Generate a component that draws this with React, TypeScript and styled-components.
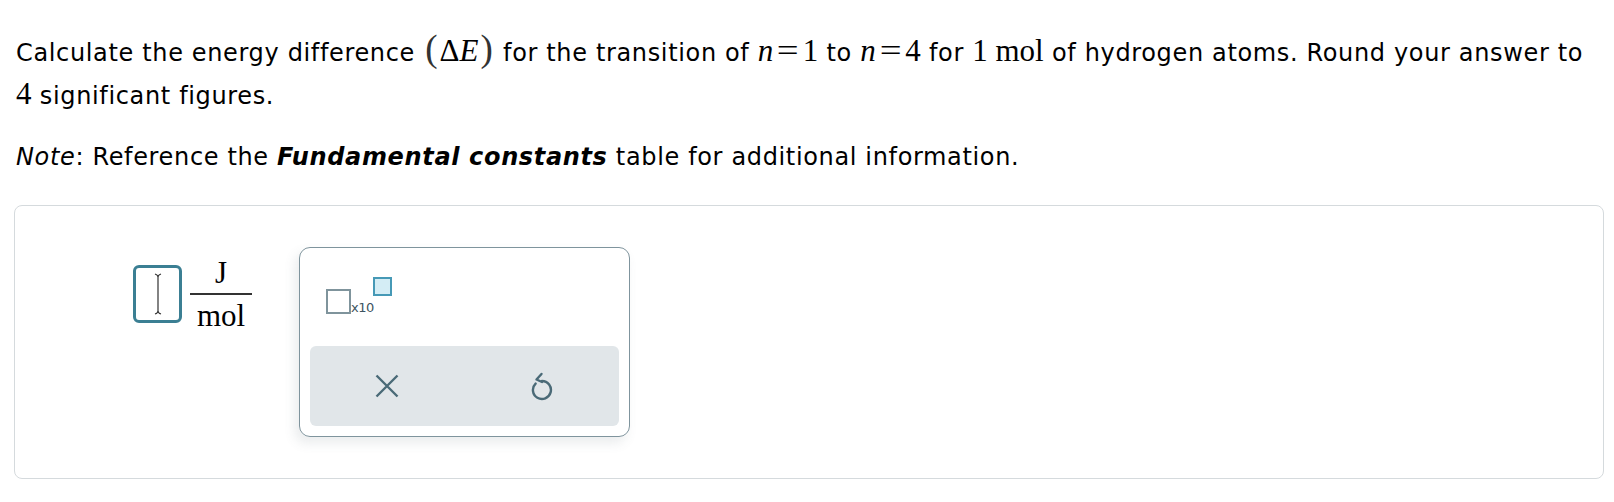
import React from 'react';
import styled, { createGlobalStyle } from 'styled-components';

const GlobalStyle = createGlobalStyle`
  body {
    margin: 0;
    background: #fff;
    font-family: "DejaVu Sans", Verdana, sans-serif;
    color: #000;
  }
`;

const Page = styled.div`
  padding: 30px 10px 0 16px;
`;

const Question = styled.p`
  margin: 0;
  font-size: 24px;
  line-height: 43px;
  letter-spacing: 0.65px;
`;

const NoteLine = styled.p`
  margin: 24px 0 0;
  font-size: 24px;
  line-height: 30px;
  letter-spacing: 0.65px;
`;

const Math = styled.span`
  font-family: "Liberation Serif", "Times New Roman", serif;
  font-size: 31px;
  line-height: 1;
  letter-spacing: 0;
`;

const Var = styled.i`
  font-family: "Liberation Serif", "Times New Roman", serif;
  font-size: 31px;
  line-height: 1;
  letter-spacing: 0;
  margin-right: 2px;
`;

const Op = styled.span`
  display: inline-block;
  font-family: "Liberation Serif", "Times New Roman", serif;
  font-size: 31px;
  line-height: 1;
  margin: 0 6px 0 4px;
  letter-spacing: 0;
  transform: scaleX(1.25);
`;

const Paren = styled.span`
  font-family: "Liberation Serif", serif;
  font-size: 37px;
  line-height: 1;
  color: #333;
  letter-spacing: 0;
  margin: 0 2px;
`;

const Panel = styled.div`
  margin: 33px 0 0 -2px;
  width: 1590px;
  height: 274px;
  box-sizing: border-box;
  border: 1px solid #d5dadd;
  border-radius: 8px;
  display: flex;
  align-items: flex-start;
  padding: 41px 0 0 118px;
`;

const UnitGroup = styled.div`
  display: flex;
  align-items: center;
  gap: 8px;
  margin-top: 9px;
`;

const InputBox = styled.div`
  width: 49px;
  height: 58px;
  box-sizing: border-box;
  border: 3px solid #3b7f93;
  border-radius: 6px;
  display: flex;
  justify-content: center;
  align-items: center;
  background: #fff;
`;

const Fraction = styled.div`
  display: flex;
  flex-direction: column;
  align-items: center;
  font-family: "Liberation Serif", "Times New Roman", serif;
  font-size: 31px;
  line-height: 30px;
  width: 62px;
  margin-top: 2px;
`;

const FracLine = styled.div`
  width: 100%;
  height: 2px;
  background: #333;
  margin: 5px 0 6px;
`;

const Keypad = styled.div`
  margin-left: 47px;
  width: 331px;
  height: 190px;
  box-sizing: border-box;
  border: 1px solid #7f949d;
  border-radius: 11px;
  box-shadow: -4px 6px 12px rgba(80, 100, 110, 0.12);
  padding: 0 10px 10px;
  display: flex;
  flex-direction: column;
`;

const Templates = styled.div`
  height: 98px;
  display: flex;
  align-items: flex-start;
  padding: 30px 0 0 16px;
  box-sizing: border-box;
`;

const SciNotation = styled.div`
  display: flex;
  align-items: flex-end;
  height: 36px;
`;

const BaseBox = styled.div`
  width: 25px;
  height: 25px;
  box-sizing: border-box;
  border: 2px solid #7f949c;
`;

const TimesTen = styled.span`
  font-family: "DejaVu Sans", sans-serif;
  font-size: 13px;
  color: #3d5561;
  letter-spacing: -0.5px;
  margin-bottom: -1px;
`;

const ExpBox = styled.div`
  width: 19px;
  height: 19px;
  box-sizing: border-box;
  border: 2px solid #4699b6;
  background: #d4edf5;
  align-self: flex-start;
  margin-left: -1px;
  margin-top: -1px;
`;

const ActionBar = styled.div`
  flex: 1;
  background: #e1e6e9;
  border-radius: 6px;
  display: flex;
  justify-content: space-around;
  align-items: center;
`;

const IconButton = styled.button`
  width: 60px;
  height: 50px;
  border: none;
  background: transparent;
  display: flex;
  justify-content: center;
  align-items: center;
  padding: 0;
`;

const Cursor = () => (
  <svg width="10" height="42" viewBox="0 0 10 42">
    <path d="M2 1 Q5 2 5 4 Q5 2 8 1 M5 4 V38 M2 41 Q5 40 5 38 Q5 40 8 41" stroke="#333" strokeWidth="1.2" fill="none" />
  </svg>
);

const CloseIcon = () => (
  <svg width="24" height="24" viewBox="0 0 24 24">
    <path d="M1.5 1.5 L22.5 22.5 M22.5 1.5 L1.5 22.5" stroke="#4a6a77" strokeWidth="2.4" fill="none" />
  </svg>
);

const ResetIcon = () => (
  <svg width="24" height="30" viewBox="0 0 24 30">
    <path
      d="M12 10 A9 9 0 1 1 5.6 12.6"
      stroke="#4a6a77"
      strokeWidth="2.4"
      fill="none"
      strokeLinecap="round"
    />
    <path d="M11.5 3 L6.5 8.5 L12 11" stroke="#4a6a77" strokeWidth="2.4" fill="none" strokeLinecap="round" strokeLinejoin="round" />
  </svg>
);

export default function App() {
  return (
    <>
      <GlobalStyle />
      <Page>
        <Question>
          Calculate the energy difference <Paren>(</Paren>
          <Math>Δ<i>E</i></Math>
          <Paren>)</Paren> for the transition of <Var>n</Var>
          <Op>=</Op>
          <Math>1</Math> to <Var>n</Var>
          <Op>=</Op>
          <Math>4</Math> for <Math>1 mol</Math> of hydrogen atoms. Round your answer to
          <br />
          <Math>4</Math> significant figures.
        </Question>
        <NoteLine>
          <i>Note</i>: Reference the <b><i>Fundamental constants</i></b> table for additional information.
        </NoteLine>
        <Panel>
          <UnitGroup>
            <InputBox>
              <Cursor />
            </InputBox>
            <Fraction>
              <span>J</span>
              <FracLine />
              <span>mol</span>
            </Fraction>
          </UnitGroup>
          <Keypad>
            <Templates>
              <SciNotation>
                <BaseBox />
                <TimesTen>x10</TimesTen>
                <ExpBox />
              </SciNotation>
            </Templates>
            <ActionBar>
              <IconButton aria-label="clear">
                <CloseIcon />
              </IconButton>
              <IconButton aria-label="reset">
                <ResetIcon />
              </IconButton>
            </ActionBar>
          </Keypad>
        </Panel>
      </Page>
    </>
  );
}
